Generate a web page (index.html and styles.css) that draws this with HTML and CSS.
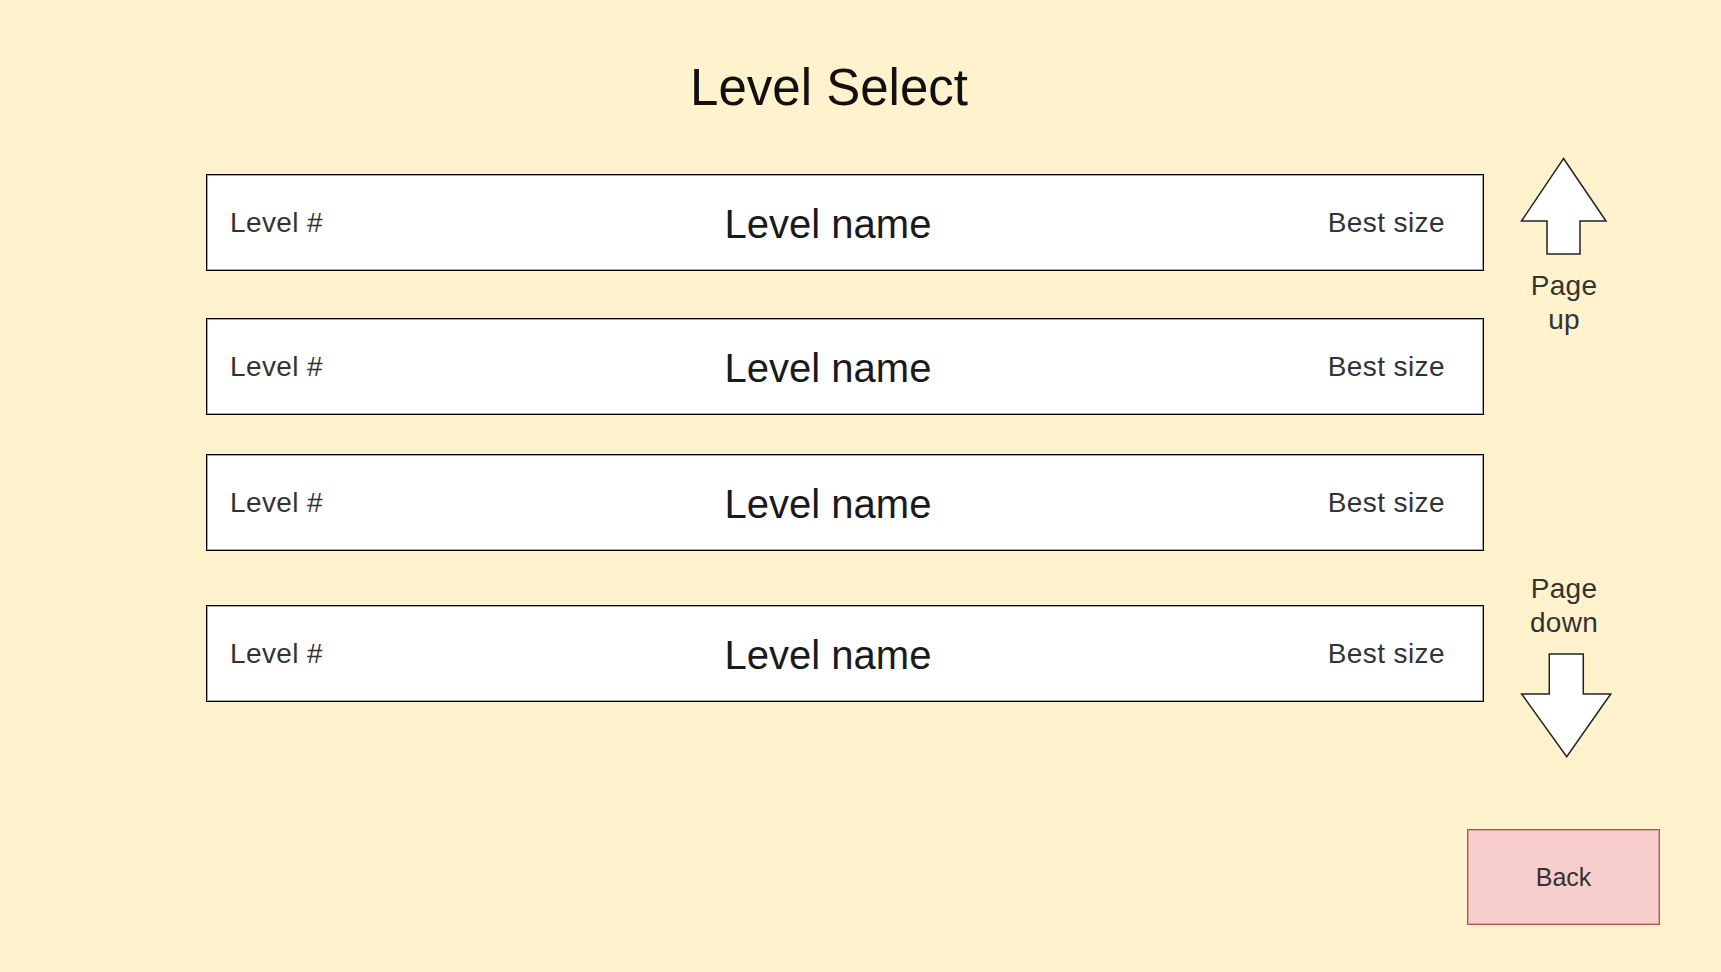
FILE: index.html
```html
<!DOCTYPE html>
<html lang="en">
<head>
<meta charset="utf-8">
<title>Level Select</title>
<link rel="stylesheet" href="styles.css">
</head>
<body>
<div class="page">
  <h1 class="title">Level Select</h1>
  <div class="main">
    <div class="list">
      <div class="row"><span class="num">Level #</span><span class="name">Level name</span><span class="best">Best size</span></div>
      <div class="row row-2"><span class="num">Level #</span><span class="name">Level name</span><span class="best">Best size</span></div>
      <div class="row row-3"><span class="num">Level #</span><span class="name">Level name</span><span class="best">Best size</span></div>
      <div class="row row-4"><span class="num">Level #</span><span class="name">Level name</span><span class="best">Best size</span></div>
    </div>
    <div class="side">
      <svg class="arrow-up" width="88" height="100" viewBox="0 0 88 100">
        <path d="M43.5 1.5 L86 64 L60 64 L60 97 L27 97 L27 64 L1.5 64 Z" fill="#fff" stroke="#222" stroke-width="1.5" stroke-linejoin="miter"/>
      </svg>
      <div class="side-label label-up">Page<br>up</div>
      <div class="side-label label-down">Page<br>down</div>
      <svg class="arrow-down" width="96" height="106" viewBox="0 0 96 106">
        <path d="M33.3 2 L67.3 2 L67.3 42 L94.7 42 L50.7 104.7 L5.7 42 L33.3 42 Z" fill="#fff" stroke="#222" stroke-width="1.5" stroke-linejoin="miter"/>
      </svg>
    </div>
  </div>
  <div class="footer">
    <button class="back">Back</button>
  </div>
</div>
</body>
</html>
```
FILE: styles.css
```css
html, body {
  margin: 0;
  padding: 0;
}
body {
  background: #fff2cc;
  font-family: "Liberation Sans", Arial, sans-serif;
  width: 1721px;
  height: 972px;
  overflow: hidden;
}
.page {
  display: flex;
  flex-direction: column;
}
.title {
  margin: 0;
  padding: 58px 63px 0 0;
  font-size: 51px;
  line-height: 60px;
  font-weight: normal;
  color: #111;
  text-align: center;
}
.main {
  margin-top: 39px;
  padding-left: 206px;
  display: grid;
  grid-template-columns: 1278px 160px;
  align-items: start;
}
.list {
  padding-top: 17px;
  display: flex;
  flex-direction: column;
}
.row {
  box-sizing: border-box;
  height: 97px;
  background: #fff;
  border: 1px solid #000;
  box-shadow: inset 0 0 0 1px rgba(0, 0, 0, 0.35);
  display: grid;
  grid-template-columns: 398px 400px 1fr;
  align-items: center;
  padding: 0 38px 0 23px;
}
.row-2 { margin-top: 47px; }
.row-3 { margin-top: 39px; }
.row-4 { margin-top: 54px; }
.num, .best {
  font-size: 28px;
  letter-spacing: 0.4px;
  color: #333;
}
.best {
  text-align: right;
}
.name {
  padding-top: 4px;
  font-size: 40px;
  color: #1a1a1a;
  text-align: center;
}
.side {
  display: flex;
  flex-direction: column;
  align-items: center;
}
.side svg {
  display: block;
}
.side-label {
  font-size: 28px;
  line-height: 34px;
  letter-spacing: 0.3px;
  color: #333;
  text-align: center;
}
.label-up { margin-top: 12px; }
.label-down { margin-top: 235px; }
.arrow-down { margin-top: 12px; }
.footer {
  display: flex;
  justify-content: flex-end;
  padding-right: 61px;
  margin-top: 71px;
}
.back {
  box-sizing: border-box;
  width: 193px;
  height: 96px;
  background: #f8cecc;
  border: 1px solid #b85450;
  box-shadow: inset 0 0 0 1px rgba(184, 84, 80, 0.4);
  font-family: "Liberation Sans", Arial, sans-serif;
  font-size: 25px;
  color: #333;
  padding: 0;
}
```
